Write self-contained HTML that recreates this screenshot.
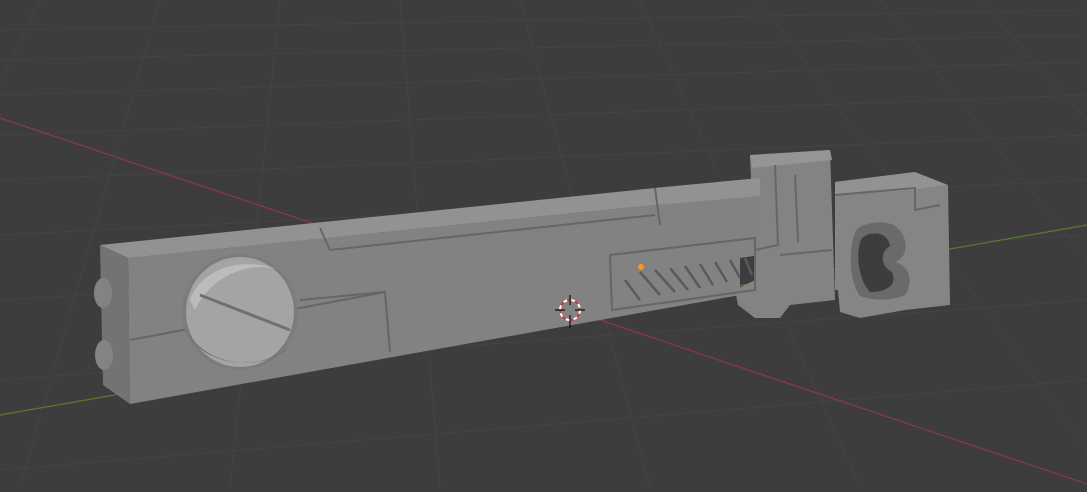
<!DOCTYPE html>
<html><head><style>html,body{margin:0;padding:0;background:#3d3d3d;overflow:hidden}</style></head>
<body>
<svg width="1087" height="487" viewBox="0 0 1087 487" xmlns="http://www.w3.org/2000/svg">
<rect width="1087" height="487" fill="#3d3d3d"/>
<g stroke="#444" stroke-width="1" fill="none">
<path d="M0 30 L1087 10 M0 60 L1087 35 M0 95 L1087 62 M0 135 L1087 95 M0 180 L1087 135 M0 235 L1087 180 M0 300 L1087 235 M0 380 L1087 300 M0 470 L1087 380"/>
<path d="M40 0 L-200 487 M160 0 L20 487 M280 0 L230 487 M400 0 L440 487 M520 0 L650 487 M640 0 L860 487 M760 0 L1087 450 M880 0 L1087 260 M980 0 L1087 120"/>
</g>
<line x1="0" y1="118" x2="1087" y2="484" stroke="#8a3a3f" stroke-width="1.3"/>
<line x1="0" y1="415" x2="1087" y2="225" stroke="#5a7a2a" stroke-width="1.3"/>
<!-- stock -->
<polygon points="835,182 915,172 915,190 948,185 950,305 905,310 860,318 840,312 838,290 835,290" fill="#858585"/>
<polygon points="835,182 915,172 948,185 915,190 835,195" fill="#929292"/>
<path d="M858,228 C848,240 848,280 860,296 C875,302 898,300 906,294 C913,280 910,268 896,262 C910,255 908,235 895,226 C885,220 868,222 858,228 Z" fill="#6a6a6a"/>
<path d="M862,238 C872,230 888,232 890,246 C880,252 880,266 892,272 C898,286 885,292 870,292 C858,280 855,250 862,238Z" fill="#3d3d3d"/>
<!-- sight block -->
<polygon points="750,155 830,150 835,300 790,305 780,318 755,318 738,305 735,290 755,280" fill="#838383"/>
<polygon points="750,155 830,150 832,160 752,168" fill="#959595"/>
<!-- rear receiver -->
<polygon points="655,188 760,178 762,255 655,262" fill="#858585"/>
<!-- main body front face -->
<polygon points="128,258 655,205 760,196 760,255 740,258 740,295 130,404" fill="#828282"/>
<!-- top face -->
<polygon points="100,245 655,188 760,178 760,196 655,205 128,258" fill="#929292"/>
<!-- left end face -->
<polygon points="100,245 128,258 130,404 103,385" fill="#737373"/>
<ellipse cx="103" cy="293" rx="9" ry="15" fill="#838383"/>
<ellipse cx="104" cy="355" rx="9" ry="15" fill="#838383"/>
<g stroke="#666" stroke-width="2" fill="none">
<path d="M130,340 L385,292 L390,352"/>
<path d="M300,300 L385,292"/>
<path d="M330,250 L655,215"/>
<path d="M320,228 L330,250"/>
<path d="M655,188 L660,225"/>
<path d="M610,255 L755,238 L755,290 L612,310 Z"/>
<path d="M775,165 L778,245 L755,250 M795,175 L798,242 M780,255 L832,250 M835,195 L915,188 L915,210 L940,205"/>
</g>
<g stroke="#5a5a5a" stroke-width="2.5" fill="none">
<path d="M625,280 L640,300 M640,272 L660,295 M655,270 L675,292 M670,268 L688,290 M685,266 L700,288 M700,264 L713,285 M715,262 L727,282 M730,260 L740,278 M745,258 L752,275"/>
</g>
<ellipse cx="240" cy="312" rx="58" ry="58" fill="#7c7c7c"/>
<ellipse cx="240" cy="312" rx="54" ry="55" fill="#a4a4a4"/>
<path d="M190,300 C200,270 240,255 280,270 C260,262 215,268 195,310Z" fill="#bcbcbc"/>
<path d="M200,295 L290,330" stroke="#707070" stroke-width="3"/>
<path d="M186,330 C200,365 260,375 290,345 C270,370 210,372 186,330Z" fill="#6e6e6e"/>
<circle cx="641" cy="267" r="3" fill="#f59a1a"/>
<circle cx="570" cy="310" r="10" fill="none" stroke="#fff" stroke-width="2" stroke-dasharray="4 4"/>
<circle cx="570" cy="310" r="10" fill="none" stroke="#d33" stroke-width="2" stroke-dasharray="4 4" stroke-dashoffset="4"/>
<path d="M570 295 V305 M570 315 V328 M555 310 H565 M575 310 H585" stroke="#111" stroke-width="1.2"/>
</svg>
</body></html>
